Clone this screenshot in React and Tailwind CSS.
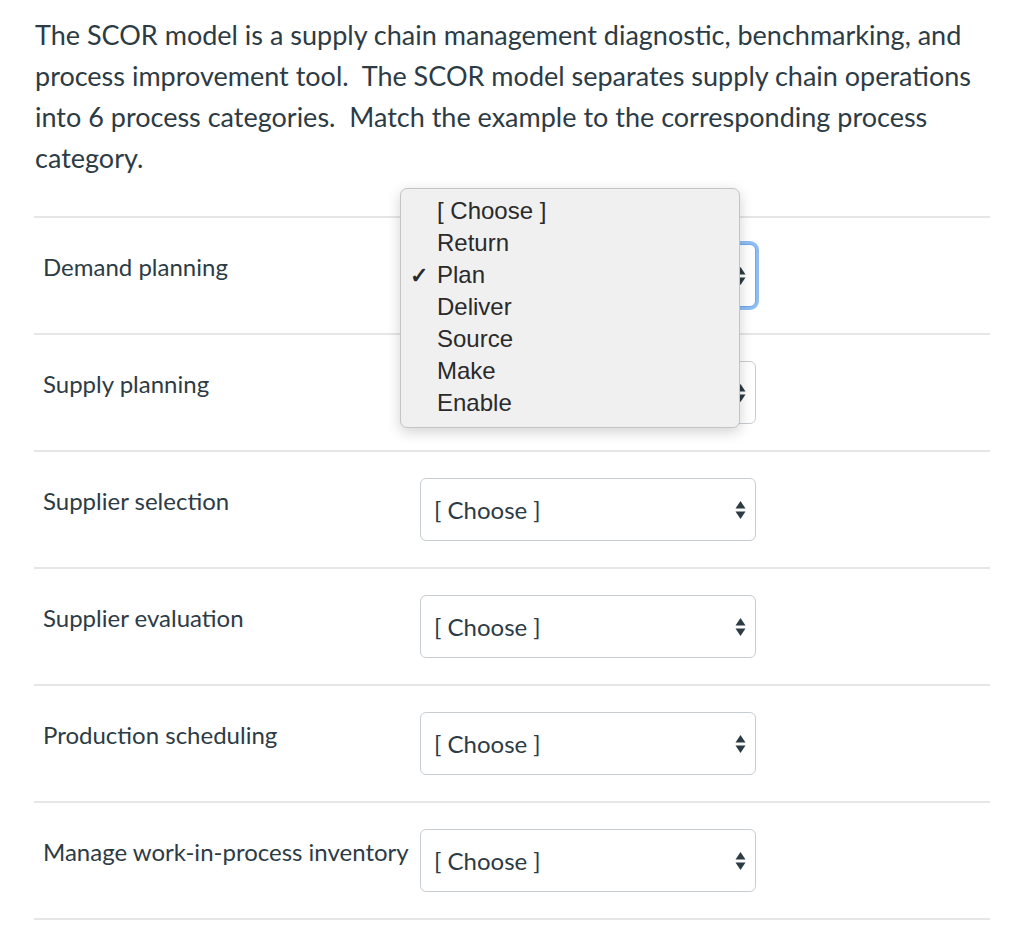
import { useState } from 'react'

const rows = [
  { label: 'Demand planning', value: 'Plan', focused: true },
  { label: 'Supply planning', value: '[ Choose ]' },
  { label: 'Supplier selection', value: '[ Choose ]' },
  { label: 'Supplier evaluation', value: '[ Choose ]' },
  { label: 'Production scheduling', value: '[ Choose ]' },
  { label: 'Manage work-in-process inventory', value: '[ Choose ]' },
]

const options = ['[ Choose ]', 'Return', 'Plan', 'Deliver', 'Source', 'Make', 'Enable']

function Arrows() {
  return (
    <svg width="11" height="20" viewBox="0 0 11 20" className="shrink-0">
      <path d="M5.5 1 L10.5 8.5 L0.5 8.5 Z" fill="#2d3b45" />
      <path d="M5.5 19 L10.5 11.5 L0.5 11.5 Z" fill="#2d3b45" />
    </svg>
  )
}

function Select({ value, focused }) {
  return (
    <div
      className={`flex items-center justify-between w-[336px] h-[63px] pl-[13px] pr-[9px] bg-white rounded-[6px] border ${
        focused ? 'border-[#6fa8ee] ring-[3px] ring-[#8fbdf3]' : 'border-[#c7cdd1]'
      }`}
    >
      <span className="text-[24px] text-[#2d3b45]">{value}</span>
      <Arrows />
    </div>
  )
}

export default function App() {
  const [selected] = useState('Plan')

  return (
    <div className="relative bg-white w-[1024px] h-[934px] pl-[34px] pr-[34px] pt-[14px] text-[#2d3b45] font-['Lato','Liberation_Sans',sans-serif]">
      <p className="text-[27px] leading-[41px] pl-px">
        The SCOR model is a supply chain management diagnostic, benchmarking, and process improvement tool.&nbsp; The SCOR model separates supply chain operations into 6 process categories.&nbsp; Match the example to the corresponding process category.
      </p>

      <div className="mt-[38px] border-t-2 border-[#e4e6e8]">
        {rows.map((row) => (
          <div
            key={row.label}
            className="flex items-center h-[117px] border-b-2 border-[#e4e6e8]"
          >
            <div className="w-[386px] pl-[9px] pb-[19px] text-[24px] leading-[33px]">{row.label}</div>
            <Select value={row.value} focused={row.focused} />
          </div>
        ))}
      </div>

      {/* Open native-style dropdown for the first select */}
      <div className="absolute left-[400px] top-[188px] w-[340px] pt-[6px] pb-[8px] bg-[#f0f0f0] border border-[#c4c4c4] rounded-[7px] shadow-[0_4px_14px_rgba(0,0,0,0.18)] font-['Liberation_Sans',sans-serif] text-[24px] text-[#2a2a2a]">
        {options.map((opt) => (
          <div key={opt} className="flex items-center h-[32px]">
            <span className="w-[36px] pl-[9px] text-[22px] font-bold">{opt === selected ? '✓' : ''}</span>
            <span>{opt}</span>
          </div>
        ))}
      </div>
    </div>
  )
}
